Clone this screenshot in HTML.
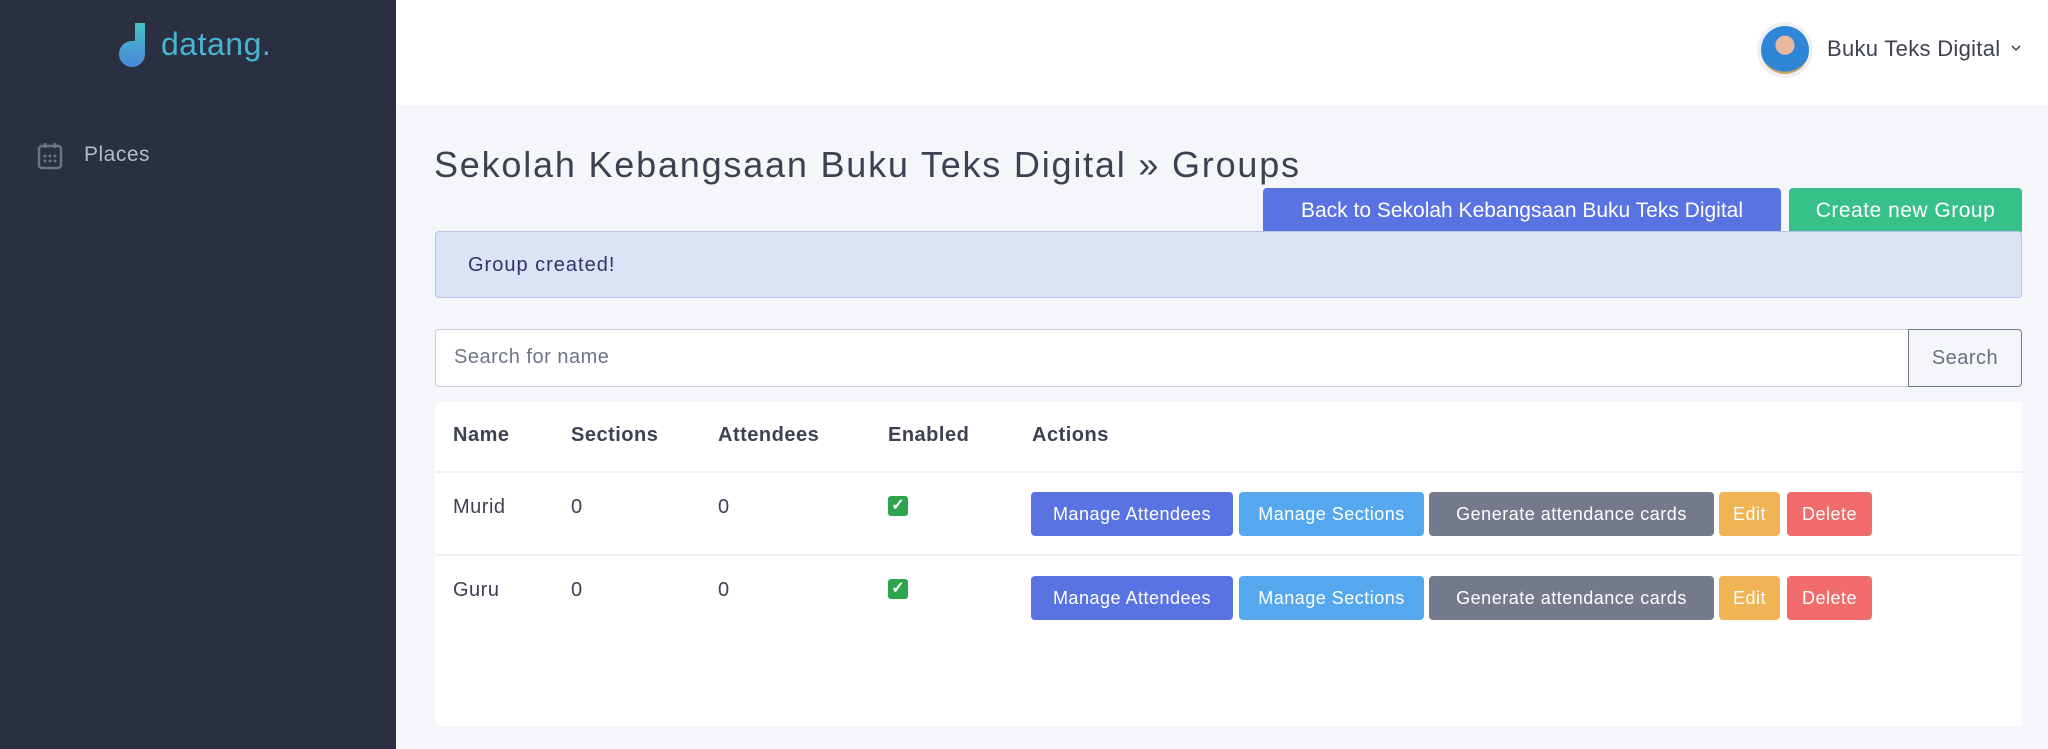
<!DOCTYPE html>
<html><head><meta charset="utf-8"><style>
*{box-sizing:border-box;margin:0;padding:0}
body{width:2048px;height:749px;overflow:hidden;font-family:"Liberation Sans",sans-serif;background:#f5f6fa;position:relative;color:#3d4152;letter-spacing:0.5px}
.side{position:absolute;left:0;top:0;width:396px;height:749px;background:#2a2f42}
.hdr{position:absolute;left:396px;top:0;right:0;height:105px;background:#fff}
.abs{position:absolute}
.btn{position:absolute;color:#fff;font-size:18px;display:flex;align-items:center;justify-content:center;border-radius:4px;height:44px;white-space:nowrap}
.th{position:absolute;top:424px;font-weight:bold;font-size:20px;color:#3d4152}
.td{position:absolute;font-size:20px;color:#3d4152}
.chk{position:absolute;width:20px;height:20px;background:#2ea44f;border-radius:3px;color:#fff;font-size:16px;line-height:20px;text-align:center;font-weight:bold;letter-spacing:0}
</style></head><body>
<div class="side">
 <svg class="abs" style="left:118px;top:23px" width="30" height="44" viewBox="0 0 30 44"><defs><linearGradient id="g" x1="0" y1="0" x2="0" y2="1"><stop offset="0" stop-color="#45c3c4"/><stop offset="1" stop-color="#4a86d9"/></linearGradient></defs><path d="M17 0h10v31a13 13 0 1 1-13-13h3z" fill="url(#g)"/></svg>
 <div class="abs" style="left:161px;top:26px;font-size:32px;color:#47b5d0;letter-spacing:0.5px">datang.</div>
 <svg class="abs" style="left:37px;top:142px" width="26" height="28" viewBox="0 0 26 28"><rect x="2" y="4" width="22" height="22" rx="3" fill="none" stroke="#6c7288" stroke-width="2.5"/><line x1="8" y1="1" x2="8" y2="6" stroke="#6c7288" stroke-width="2.5"/><line x1="18" y1="1" x2="18" y2="6" stroke="#6c7288" stroke-width="2.5"/><g fill="#6c7288"><circle cx="8" cy="14" r="1.5"/><circle cx="13" cy="14" r="1.5"/><circle cx="18" cy="14" r="1.5"/><circle cx="8" cy="19" r="1.5"/><circle cx="13" cy="19" r="1.5"/><circle cx="18" cy="19" r="1.5"/></g></svg>
 <div class="abs" style="left:84px;top:143px;font-size:21px;color:#b4b9cf">Places</div>
</div>
<div class="hdr">
 <div class="abs" style="left:1361px;top:22px;width:56px;height:56px;border-radius:50%;background:#f0f0f2;padding:4px"><div style="width:48px;height:48px;border-radius:50%;background:radial-gradient(circle at 50% 40%,#e8b9a0 0 25%,#2f86d6 26% 70%,#c9a460 71%)"></div></div>
 <div class="abs" style="left:1431px;top:36px;font-size:22px;color:#3d4152;letter-spacing:0.3px">Buku Teks Digital</div>
 <svg class="abs" style="left:1614px;top:44px" width="12" height="8" viewBox="0 0 12 8"><path d="M2 2l4 4 4-4" fill="none" stroke="#555" stroke-width="1.6"/></svg>
</div>
<div class="abs" style="left:434px;top:144px;font-size:36px;color:#3d4152;letter-spacing:1.8px">Sekolah Kebangsaan Buku Teks Digital » Groups</div>
<div class="btn" style="left:1263px;top:188px;width:518px;height:46px;background:#5a73e3;font-size:21px;letter-spacing:0">Back to Sekolah Kebangsaan Buku Teks Digital</div>
<div class="btn" style="left:1789px;top:188px;width:233px;height:46px;background:#38c08a;font-size:21px">Create new Group</div>
<div class="abs" style="left:435px;top:231px;width:1587px;height:67px;background:#dde3f7;border:1px solid #b9c3ea;border-radius:4px;font-size:20px;color:#2c3566;padding:22px 0 0 32px;letter-spacing:1px">Group created!</div>
<div class="abs" style="left:435px;top:329px;width:1474px;height:58px;background:#fff;border:1px solid #c9ccd8;border-radius:4px 0 0 4px;font-size:20px;color:#6f7488;padding:16px 0 0 18px">Search for name</div>
<div class="abs" style="left:1908px;top:329px;width:114px;height:58px;background:#f5f6fa;border:1.5px solid #757a90;border-radius:0 4px 4px 0;font-size:20px;color:#6a6f82;text-align:center;padding-top:17px">Search</div>
<div class="abs" style="left:435px;top:402px;width:1587px;height:324px;background:#fff;border-radius:4px"></div>
<div class="abs" style="left:435px;top:471px;width:1587px;height:2px;background:#f0f1f6"></div>
<div class="abs" style="left:435px;top:554px;width:1587px;height:2px;background:#f0f1f6"></div>
<div class="th" style="left:453px">Name</div><div class="th" style="left:571px">Sections</div><div class="th" style="left:718px">Attendees</div><div class="th" style="left:888px">Enabled</div><div class="th" style="left:1032px">Actions</div>
<div class="td" style="left:453px;top:496px">Murid</div><div class="td" style="left:571px;top:496px">0</div><div class="td" style="left:718px;top:496px">0</div><div class="chk" style="left:888px;top:496px">✓</div>
<div class="td" style="left:453px;top:579px">Guru</div><div class="td" style="left:571px;top:579px">0</div><div class="td" style="left:718px;top:579px">0</div><div class="chk" style="left:888px;top:579px">✓</div>
<div class="btn" style="left:1031px;top:492px;width:202px;background:#5a73e3">Manage Attendees</div>
<div class="btn" style="left:1239px;top:492px;width:185px;background:#55a8ee">Manage Sections</div>
<div class="btn" style="left:1429px;top:492px;width:285px;background:#74798b">Generate attendance cards</div>
<div class="btn" style="left:1719px;top:492px;width:61px;background:#f0b455">Edit</div>
<div class="btn" style="left:1787px;top:492px;width:85px;background:#f26c6c">Delete</div>
<div class="btn" style="left:1031px;top:576px;width:202px;background:#5a73e3">Manage Attendees</div>
<div class="btn" style="left:1239px;top:576px;width:185px;background:#55a8ee">Manage Sections</div>
<div class="btn" style="left:1429px;top:576px;width:285px;background:#74798b">Generate attendance cards</div>
<div class="btn" style="left:1719px;top:576px;width:61px;background:#f0b455">Edit</div>
<div class="btn" style="left:1787px;top:576px;width:85px;background:#f26c6c">Delete</div>
</body></html>
